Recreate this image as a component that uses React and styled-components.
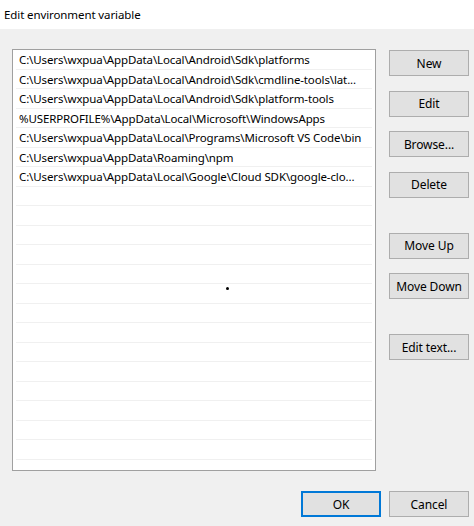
import styled, { createGlobalStyle } from 'styled-components';

const GlobalStyle = createGlobalStyle`
  html, body {
    margin: 0;
    padding: 0;
    background: #f0f0f0;
  }
  * {
    box-sizing: border-box;
  }
`;

// shown as the dialog clips them
const paths = [
  'C:\\Users\\wxpua\\AppData\\Local\\Android\\Sdk\\platforms',
  'C:\\Users\\wxpua\\AppData\\Local\\Android\\Sdk\\cmdline-tools\\lat...',
  'C:\\Users\\wxpua\\AppData\\Local\\Android\\Sdk\\platform-tools',
  '%USERPROFILE%\\AppData\\Local\\Microsoft\\WindowsApps',
  'C:\\Users\\wxpua\\AppData\\Local\\Programs\\Microsoft VS Code\\bin',
  'C:\\Users\\wxpua\\AppData\\Roaming\\npm',
  'C:\\Users\\wxpua\\AppData\\Local\\Google\\Cloud SDK\\google-clo...',
];

const TOTAL_ROWS = 22;

const App = () => {
  const rows = [...paths, ...Array(TOTAL_ROWS - paths.length).fill('')];

  return (
    <Window>
      <GlobalStyle />
      <TitleBar>Edit environment variable</TitleBar>
      <Body>
        <List>
          {rows.map((p, i) => (
            <Row key={i}>{p}</Row>
          ))}
          <Dot />
        </List>
        <ButtonColumn>
          <ButtonGroup>
            <Button>New</Button>
            <Button>Edit</Button>
            <Button>Browse...</Button>
            <Button>Delete</Button>
          </ButtonGroup>
          <ButtonGroup>
            <Button>Move Up</Button>
            <Button>Move Down</Button>
          </ButtonGroup>
          <ButtonGroup>
            <Button>Edit text...</Button>
          </ButtonGroup>
        </ButtonColumn>
      </Body>
      <Footer>
        <Button $primary>OK</Button>
        <Button>Cancel</Button>
      </Footer>
    </Window>
  );
};

const Window = styled.div`
  width: 474px;
  height: 526px;
  background: #f0f0f0;
  font-family: 'Segoe UI', 'Noto Sans', 'Open Sans', sans-serif;
  font-size: 12px;
  color: #000;
  overflow: hidden;
`;

const TitleBar = styled.div`
  height: 29px;
  background: #fff;
  display: flex;
  align-items: center;
  padding-left: 4px;
  font-size: 11.5px;
  letter-spacing: -0.1px;
`;

const Body = styled.div`
  display: grid;
  grid-template-columns: 364px 80px;
  column-gap: 13px;
  padding: 20px 0 0 12px;
`;

const List = styled.div`
  position: relative;
  height: 422px;
  background: #fff;
  border: 1px solid #a0a0a0;
  padding: 0 3px;
  overflow: hidden;
`;

const Row = styled.div`
  height: 19.5px;
  line-height: 18.5px;
  padding-top: 1px;
  border-bottom: 1px solid #f0f0f0;
  padding-left: 3px;
  font-size: 11.5px;
  letter-spacing: -0.12px;
  white-space: nowrap;
  overflow: hidden;
`;

const Dot = styled.span`
  position: absolute;
  left: 213px;
  top: 237px;
  width: 3px;
  height: 3px;
  border-radius: 50%;
  background: #000;
`;

const ButtonColumn = styled.div`
  display: flex;
  flex-direction: column;
  gap: 35px;
  padding-top: 1px;
`;

const ButtonGroup = styled.div`
  display: flex;
  flex-direction: column;
  gap: 14.5px;
`;

const Button = styled.button`
  width: 80px;
  height: 26px;
  padding: 0;
  background: #e1e1e1;
  border: ${(p) => (p.$primary ? '2px solid #0078d7' : '1px solid #adadad')};
  font-family: inherit;
  font-size: 12px;
  letter-spacing: -0.1px;
  color: #000;
  text-align: center;
`;

const Footer = styled.div`
  display: flex;
  justify-content: flex-end;
  gap: 8px;
  padding: 20px 5px 0 0;
`;

export default App;
